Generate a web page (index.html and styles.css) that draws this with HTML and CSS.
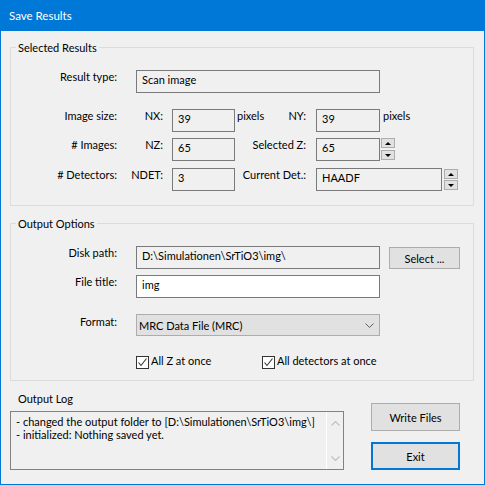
FILE: index.html
```html
<!DOCTYPE html>
<html>
<head>
<meta charset="utf-8">
<title>Save Results</title>
<link rel="stylesheet" href="styles.css">
</head>
<body>
<div class="window">
  <div class="titlebar">Save Results</div>

  <div class="group g1">
    <span class="legend">Selected Results</span>
    <div class="row">
      <span class="lbl gap">Result type:</span>
      <div class="field ro w244">Scan image</div>
    </div>
    <div class="row r2">
      <span class="lbl">Image size:</span>
      <span class="sub">NX:</span>
      <div class="field ro w63">39</div>
      <div class="mid"><span class="unit">pixels</span><span>NY:</span></div>
      <div class="field ro w64">39</div>
      <span class="unit2">pixels</span>
    </div>
    <div class="row r3">
      <span class="lbl"># Images:</span>
      <span class="sub">NZ:</span>
      <div class="field ro w63">65</div>
      <div class="mid end"><span>Selected Z:</span></div>
      <div class="field ro w64">65</div>
      <div class="spin s1">
        <div class="sbtn"><span class="up"></span></div>
        <div class="sbtn"><span class="down"></span></div>
      </div>
    </div>
    <div class="row r4">
      <span class="lbl"># Detectors:</span>
      <span class="sub">NDET:</span>
      <div class="field ro w63">3</div>
      <div class="mid end"><span>Current Det.:</span></div>
      <div class="field ro w126">HAADF</div>
      <div class="spin s2">
        <div class="sbtn"><span class="up"></span></div>
        <div class="sbtn"><span class="down"></span></div>
      </div>
    </div>
  </div>

  <div class="group g2">
    <span class="legend">Output Options</span>
    <div class="row">
      <span class="lbl gap">Disk path:</span>
      <div class="field ro w244">D:\Simulationen\SrTiO3\img\</div>
      <div class="btn select">Select ...</div>
    </div>
    <div class="row r-file">
      <span class="lbl gap">File title:</span>
      <div class="field white w244">img</div>
    </div>
    <div class="row r-format">
      <span class="lbl gap fmt">Format:</span>
      <div class="combo w244">
        <span>MRC Data File (MRC)</span>
        <svg class="chev" width="9" height="5" viewBox="0 0 9 5"><polyline points="0.5,0.5 4.5,4.5 8.5,0.5" fill="none" stroke="#606060" stroke-width="1"/></svg>
      </div>
    </div>
    <div class="row r-checks">
      <label class="check c1">
        <span class="box"><svg width="11" height="11" viewBox="0 0 11 11"><polyline points="1.5,5.5 4,8.5 9.5,1.5" fill="none" stroke="#333" stroke-width="1.1"/></svg></span>
        <span class="ctext">All Z at once</span>
      </label>
      <label class="check">
        <span class="box"><svg width="11" height="11" viewBox="0 0 11 11"><polyline points="1.5,5.5 4,8.5 9.5,1.5" fill="none" stroke="#333" stroke-width="1.1"/></svg></span>
        <span class="ctext">All detectors at once</span>
      </label>
    </div>
  </div>

  <div class="bottom">
    <div class="logcol">
      <div class="loglabel">Output Log</div>
      <div class="log">
        <div class="logtext">
          <div>- changed the output folder to [D:\Simulationen\SrTiO3\img\]</div>
          <div>- initialized: Nothing saved yet.</div>
        </div>
        <div class="scroll">
          <svg width="9" height="5" viewBox="0 0 9 5"><polyline points="0.5,4.5 4.5,0.5 8.5,4.5" fill="none" stroke="#c0c0c0" stroke-width="1.2"/></svg>
          <svg width="9" height="5" viewBox="0 0 9 5"><polyline points="0.5,0.5 4.5,4.5 8.5,0.5" fill="none" stroke="#c0c0c0" stroke-width="1.2"/></svg>
        </div>
      </div>
    </div>
    <div class="btncol">
      <div class="btn big">Write Files</div>
      <div class="btn big default">Exit</div>
    </div>
  </div>
</div>
</body>
</html>
```
FILE: styles.css
```css
body {
  margin: 0;
  background: #f0f0f0;
}
.window {
  width: 485px;
  height: 485px;
  box-sizing: border-box;
  border: 1px solid #0078d7;
  border-top: 0;
  background: #f0f0f0;
  font-family: "Lato", "Liberation Sans", sans-serif;
  font-size: 11px;
  line-height: 13px;
  color: #000;
  overflow: hidden;
}
.titlebar {
  height: 31px;
  margin: 0 -1px;
  padding-left: 9px;
  background: #0078d7;
  color: #fff;
  font-size: 11.5px;
  line-height: 31px;
}
.group {
  position: relative;
  margin-left: 9px;
  width: 464px;
  box-sizing: border-box;
  border: 1px solid #dcdcdc;
  padding-top: 22px;
}
.g1 { margin-top: 16px; height: 159px; }
.g2 { margin-top: 17px; height: 158px; }
.legend {
  position: absolute;
  left: 5px;
  top: -7px;
  padding: 0 2px;
  background: #f0f0f0;
}
.row {
  display: flex;
  align-items: flex-start;
}
.r2 { margin-top: 16px; }
.r3 { margin-top: 6px; }
.r4 { margin-top: 7px; }
.lbl {
  width: 106px;
  text-align: right;
  flex: none;
}
.lbl.gap { margin-right: 19px; }
.lbl.fmt { margin-top: 1px; }
.sub {
  width: 46px;
  margin-right: 9px;
  text-align: right;
  flex: none;
}
.field {
  box-sizing: border-box;
  height: 23px;
  border: 1px solid #7a7a7a;
  padding: 2px 5px;
  white-space: nowrap;
  overflow: hidden;
  flex: none;
}
.ro { background: #f0f0f0; }
.white { background: #fff; }
.w244 { width: 244px; }
.w63 { width: 63px; }
.w64 { width: 64px; }
.w126 { width: 126px; }
.mid {
  width: 81px;
  box-sizing: border-box;
  padding: 0 10px 0 2px;
  display: flex;
  justify-content: space-between;
  flex: none;
}
.mid.end { justify-content: flex-end; }
.unit2 { margin-left: 3px; }
.spin {
  display: flex;
  flex-direction: column;
  width: 14px;
  flex: none;
}
.s1 { margin-left: 1px; gap: 2px; }
.s2 { margin-left: 2px; margin-top: 1px; gap: 1px; }
.sbtn {
  box-sizing: border-box;
  height: 10px;
  border: 1px solid #adadad;
  background: #e1e1e1;
  display: flex;
  align-items: center;
  justify-content: center;
}
.up {
  width: 0;
  height: 0;
  border-left: 3px solid transparent;
  border-right: 3px solid transparent;
  border-bottom: 3px solid #000;
}
.down {
  width: 0;
  height: 0;
  border-left: 3px solid transparent;
  border-right: 3px solid transparent;
  border-top: 3px solid #000;
}
.btn {
  box-sizing: border-box;
  border: 1px solid #adadad;
  background: #e1e1e1;
  display: flex;
  align-items: center;
  justify-content: center;
  flex: none;
}
.select {
  width: 71px;
  height: 22px;
  margin-left: 9px;
  margin-top: 1px;
}
.r-file { margin-top: 6px; }
.r-format { margin-top: 16px; }
.combo {
  box-sizing: border-box;
  height: 22px;
  border: 1px solid #adadad;
  background: #e1e1e1;
  padding: 0 5px 0 2px;
  display: flex;
  align-items: center;
  justify-content: space-between;
  flex: none;
}
.chev { display: block; }
.r-checks { margin-top: 20px; height: 13px; }
.check {
  display: flex;
  align-items: flex-start;
}
.c1 { margin-left: 125px; width: 126px; }
.box {
  box-sizing: border-box;
  width: 13px;
  height: 13px;
  border: 1px solid #333;
  background: #fff;
  display: flex;
  align-items: center;
  justify-content: center;
}
.box svg { display: block; }
.ctext { margin-left: 2px; margin-top: -2px; }
.bottom {
  display: flex;
  margin-top: 11px;
}
.logcol {
  margin-left: 9px;
  width: 334px;
}
.loglabel { padding-left: 8px; }
.log {
  margin-top: 6px;
  box-sizing: border-box;
  height: 59px;
  border: 1px solid #828282;
  background: #f0f0f0;
  display: flex;
}
.logtext {
  flex: 1;
  padding: 3px 0 0 5px;
  white-space: nowrap;
  overflow: hidden;
}
.scroll {
  width: 17px;
  box-sizing: border-box;
  border-left: 1px solid #fff;
  display: flex;
  flex-direction: column;
  align-items: center;
  justify-content: space-between;
  padding: 9px 0 8px;
}
.scroll svg { display: block; }
.btncol {
  margin-left: 27px;
  width: 89px;
}
.big {
  height: 28px;
  margin-top: 11px;
}
.default {
  border: 2px solid #0078d7;
}
```
